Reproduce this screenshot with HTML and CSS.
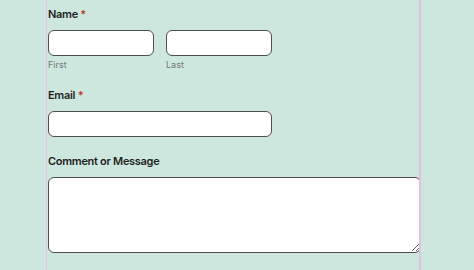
FILE: index.html
```html
<!DOCTYPE html>
<html>
<head>
<meta charset="utf-8">
<link rel="stylesheet" href="styles.css">
</head>
<body>
<div class="page">
  <form class="form">
    <div class="field">
      <div class="label">Name <span class="req">*</span></div>
      <div class="name-row">
        <div class="sub">
          <input class="input" type="text">
          <span class="sublabel">First</span>
        </div>
        <div class="sub">
          <input class="input" type="text">
          <span class="sublabel">Last</span>
        </div>
      </div>
    </div>
    <div class="field">
      <div class="label">Email <span class="req">*</span></div>
      <input class="input email" type="text">
    </div>
    <div class="field">
      <div class="label">Comment or Message</div>
      <textarea class="textarea"></textarea>
    </div>
  </form>
</div>
</body>
</html>
```
FILE: styles.css
```css
html, body {
  margin: 0;
  padding: 0;
  background: #cee7de;
  height: 100%;
  overflow: hidden;
}
.page {
  position: relative;
  height: 270px;
  padding-left: 48px;
  font-family: Inter, "Liberation Sans", sans-serif;
  color: #1e1e1e;
}
.page::before,
.page::after {
  content: "";
  position: absolute;
  top: 0;
  bottom: 0;
  pointer-events: none;
}
.page::before {
  left: 46px;
  width: 1px;
  background: #d9cbe8;
}
.page::after {
  left: 419px;
  width: 2px;
  background: #e6bde6;
}
.form {
  width: 373px;
  padding-top: 7px;
  display: flex;
  flex-direction: column;
  gap: 17px;
}
.field {
  display: flex;
  flex-direction: column;
  align-items: flex-start;
}
.label {
  font-size: 11px;
  font-weight: 600;
  line-height: 14px;
  letter-spacing: -0.3px;
  margin-bottom: 9px;
}
.req {
  color: #c0392b;
}
.name-row {
  display: flex;
  gap: 12px;
}
.sub {
  display: flex;
  flex-direction: column;
}
.input {
  box-sizing: border-box;
  width: 106px;
  height: 26px;
  border: 1px solid #4f4f4f;
  border-radius: 6px;
  background: #fff;
  margin: 0;
  padding: 0 8px;
}
.email {
  width: 224px;
}
.sublabel {
  font-size: 9px;
  color: #757575;
  line-height: 12px;
  margin-top: 3px;
}
.textarea {
  box-sizing: border-box;
  display: block;
  width: 373px;
  height: 76px;
  border: 1px solid #4f4f4f;
  border-radius: 6px;
  background: #fff;
  margin: 0;
  padding: 8px;
}
```
